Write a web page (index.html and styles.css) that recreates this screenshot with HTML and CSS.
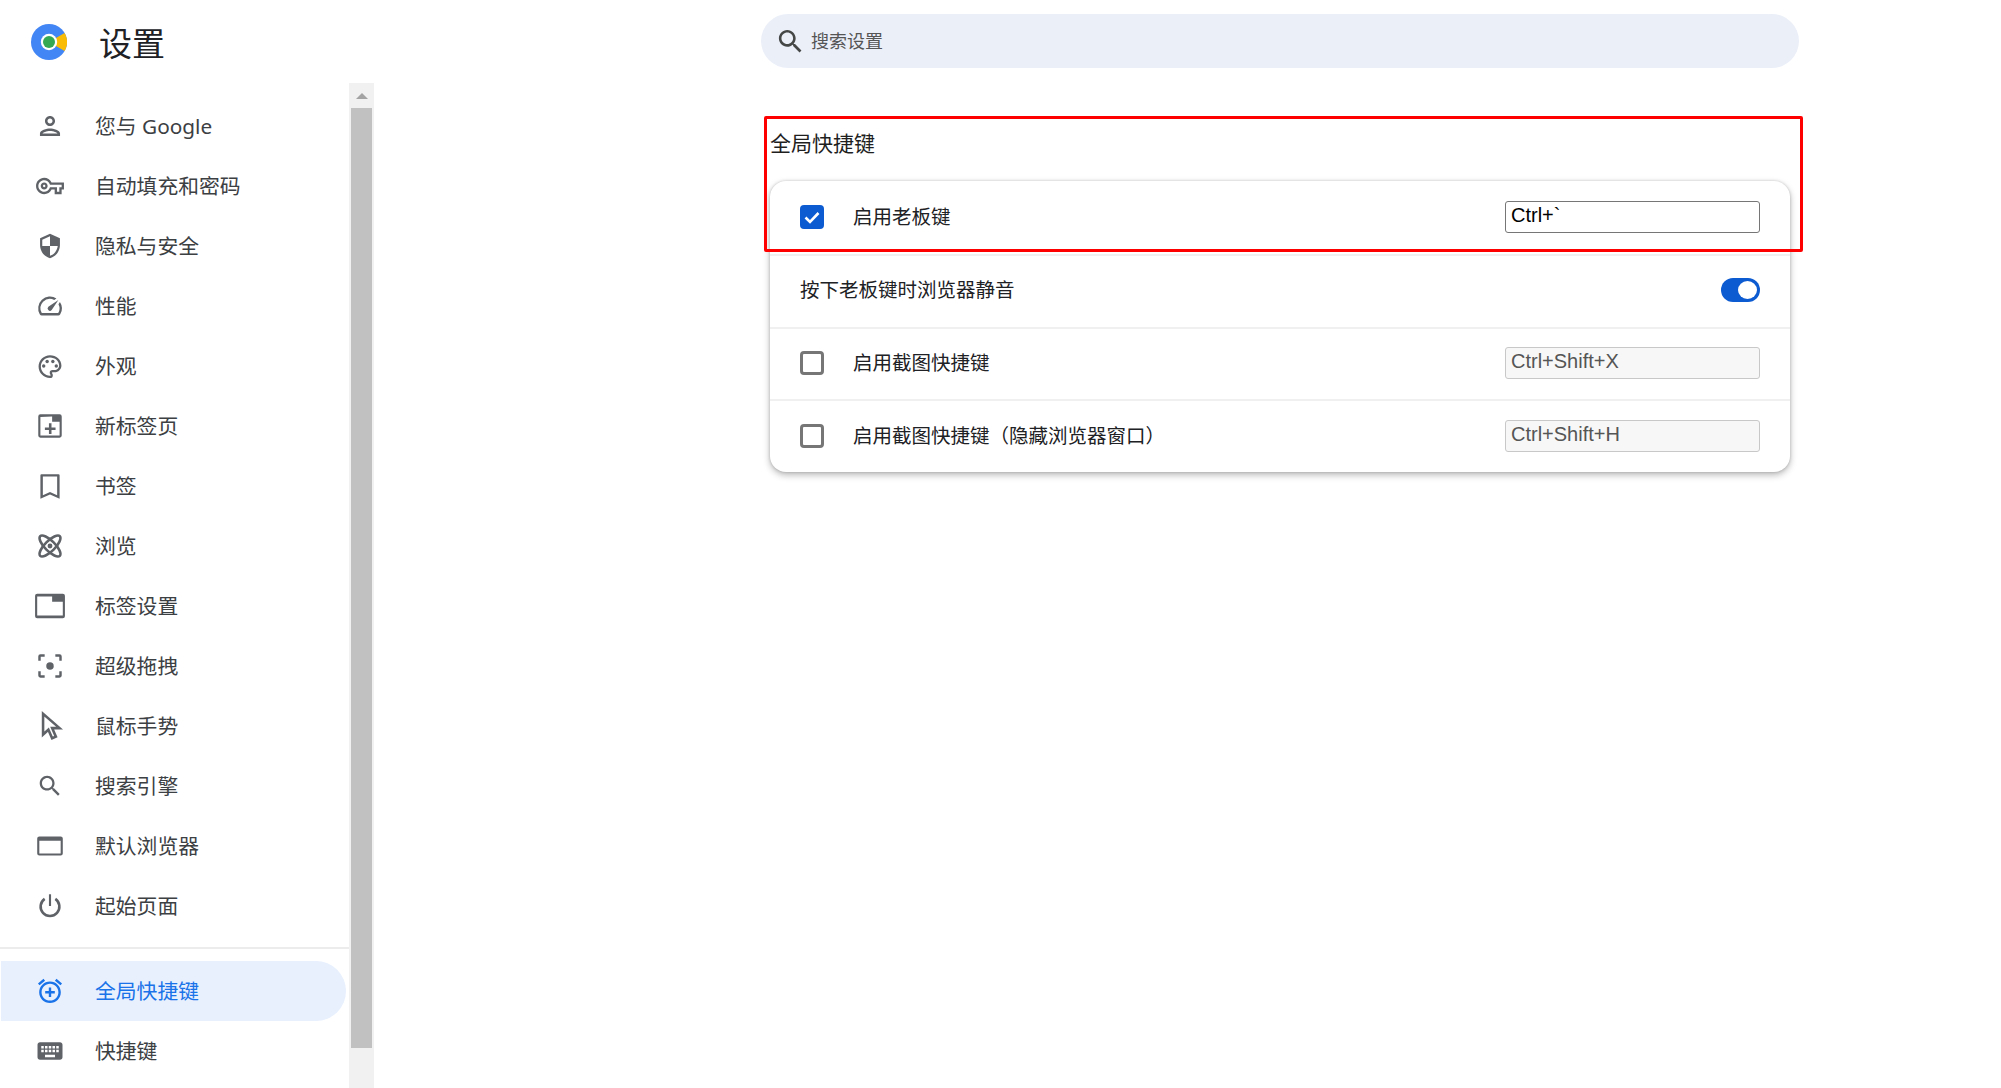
FILE: index.html
```html
<!DOCTYPE html>
<html lang="zh-CN">
<head>
<meta charset="utf-8">
<title>设置</title>
<link rel="stylesheet" href="styles.css">
</head>
<body>
<aside class="sidebar">
  <header class="brand">
    <svg class="logo" viewBox="0 0 36 36"><circle cx="18" cy="18" r="18" fill="#4285f4"/><path d="M18 18L33.6 9A18 18 0 0 1 33.6 27Z" fill="#fbbc05"/><circle cx="18" cy="18" r="8.2" fill="#fff"/><circle cx="18" cy="18" r="6" fill="#34a853"/></svg>
    <h1 class="brand-title">设置</h1>
  </header>
  <div class="side-body">
    <nav class="nav">
      <a class="nav-item"><svg class="ico" viewBox="-.75 -.75 25.500 25.500"><path d="M12 6c1.100 0 2 .9 2 2s-.9 2-2 2-2-.9-2-2 .9-2 2-2m0 10c2.700 0 5.800 1.290 6 2H6c.23-.72 3.310-2 6-2m0-12C9.790 4 8 5.790 8 8s1.790 4 4 4 4-1.790 4-4-1.790-4-4-4zm0 10c-2.670 0-8 1.340-8 4v2h16v-2c0-2.660-5.330-4-8-4z"/></svg><span>您与 Google</span></a>
      <a class="nav-item"><svg class="ico" viewBox="-1.750 -1.750 27.500 27.500"><path d="M22 19h-6v-4h-2.680c-1.140 2.420-3.600 4-6.320 4-3.860 0-7-3.140-7-7s3.140-7 7-7c2.720 0 5.170 1.580 6.320 4H24v6h-2v4zm-4-2h2v-4h2v-2H11.940l-.23-.67C11.010 8.340 9.110 7 7 7c-2.760 0-5 2.240-5 5s2.240 5 5 5c2.110 0 4.010-1.340 4.710-3.330l.23-.67H18v4zM7 15c-1.650 0-3-1.350-3-3s1.350-3 3-3 3 1.350 3 3-1.350 3-3 3zm0-4c-.55 0-1 .45-1 1s.45 1 1 1 1-.45 1-1-.45-1-1-1z"/></svg><span>自动填充和密码</span></a>
      <a class="nav-item"><svg class="ico" viewBox="-2.500 -2.500 29 29"><path d="M12 1L3 5v6c0 5.550 3.840 10.740 9 12 5.160-1.260 9-6.450 9-12V5l-9-4zm0 10.990h7c-.53 4.120-3.280 7.790-7 8.940V12H5V6.300l7-3.110v8.800z"/></svg><span>隐私与安全</span></a>
      <a class="nav-item"><svg class="ico" viewBox="-1.500 -1.500 27 27"><path d="M20.380 8.570l-1.230 1.850a8 8 0 0 1-.22 7.580H5.070A8 8 0 0 1 15.580 6.850l1.850-1.230A10 10 0 0 0 3.350 19a2 2 0 0 0 1.720 1h13.850a2 2 0 0 0 1.740-1 10 10 0 0 0-.27-10.440zm-9.790 6.840a2 2 0 0 0 2.830 0l5.660-8.490-8.490 5.660a2 2 0 0 0 0 2.830z"/></svg><span>性能</span></a>
      <a class="nav-item"><svg class="ico" viewBox="-2 -2.500 28 28"><path d="M12 22C6.490 22 2 17.510 2 12S6.490 2 12 2s10 4.040 10 9c0 3.310-2.690 6-6 6h-1.770c-.28 0-.5.22-.5.5 0 .12.05.23.13.33.41.47.64 1.060.64 1.670A2.500 2.500 0 0 1 12 22zm0-18c-4.410 0-8 3.590-8 8s3.590 8 8 8c.28 0 .5-.22.5-.5a.54.54 0 0 0-.14-.35c-.41-.46-.63-1.050-.63-1.650a2.500 2.500 0 0 1 2.500-2.500H16c2.210 0 4-1.790 4-4 0-3.860-3.590-7-8-7z"/><circle cx="6.500" cy="11.500" r="1.500"/><circle cx="9.500" cy="7.500" r="1.500"/><circle cx="14.500" cy="7.500" r="1.500"/><circle cx="17.500" cy="11.500" r="1.500"/></svg><span>外观</span></a>
      <a class="nav-item"><svg class="ico" viewBox="0 0 30 30"><path d="M6 4h18a2 2 0 0 1 2 2v18a2 2 0 0 1-2 2H6a2 2 0 0 1-2-2V6a2 2 0 0 1 2-2zm0 2.500v17.500h18V11h-7V6z" fill-rule="evenodd"/><path d="M14 12.500h2.400v3.800h3.800v2.400h-3.800v3.800H14v-3.800h-3.800v-2.400H14z"/></svg><span>新标签页</span></a>
      <a class="nav-item"><svg class="ico" viewBox="0 0 30 30"><path d="M7 4h16a1 1 0 0 1 1 1v22l-9-4-9 4V5a1 1 0 0 1 1-1zm1.300 2.200v17.400l6.700-3 6.700 3V6.200z" fill-rule="evenodd"/></svg><span>书签</span></a>
      <a class="nav-item"><svg class="ico" viewBox="0 0 30 30"><g class="ico-line"><ellipse cx="15" cy="15" rx="13" ry="4.800" transform="rotate(45 15 15)"/><ellipse cx="15" cy="15" rx="13" ry="4.800" transform="rotate(-45 15 15)"/></g><circle cx="15" cy="15" r="2.300"/></svg><span>浏览</span></a>
      <a class="nav-item"><svg class="ico" viewBox="0 0 30 30"><path d="M3 3.500h24a2 2 0 0 1 2 2v19a2 2 0 0 1-2 2H3a2 2 0 0 1-2-2v-19a2 2 0 0 1 2-2zm0 2.500v18h24V11H17V6z" fill-rule="evenodd"/></svg><span>标签设置</span></a>
      <a class="nav-item"><svg class="ico" viewBox="0 0 30 30"><path d="M4 10V6a2 2 0 0 1 2-2h4v2.300H6.300V10zM20 4h4a2 2 0 0 1 2 2v4h-2.300V6.300H20zM4 20h2.300v3.700H10V26H6a2 2 0 0 1-2-2zM23.700 20H26v4a2 2 0 0 1-2 2h-4v-2.300h3.700z"/><circle cx="15" cy="15" r="3.500"/></svg><span>超级拖拽</span></a>
      <a class="nav-item"><svg class="ico" viewBox="0 0 30 30"><path class="ico-line" d="M8.500 3.500v19.500l5-4.500 3.500 8 3.500-1.500-3.500-8h7z"/></svg><span>鼠标手势</span></a>
      <a class="nav-item"><svg class="ico" viewBox="-2 -2 28 28"><path d="M15.500 14h-.79l-.28-.27C15.410 12.590 16 11.110 16 9.500 16 5.910 13.090 3 9.500 3S3 5.910 3 9.500 5.910 16 9.500 16c1.610 0 3.090-.59 4.230-1.570l.27.28v.79l5 4.990L20.490 19l-4.990-5zm-6 0C7.010 14 5 11.990 5 9.500S7.010 5 9.500 5 14 7.010 14 9.500 11.990 14 9.500 14z"/></svg><span>搜索引擎</span></a>
      <a class="nav-item"><svg class="ico" viewBox="0 0 30 30"><path d="M5 6h20a2 2 0 0 1 2 2v14a2 2 0 0 1-2 2H5a2 2 0 0 1-2-2V8a2 2 0 0 1 2-2zm0 4v12h20V10z" fill-rule="evenodd"/></svg><span>默认浏览器</span></a>
      <a class="nav-item"><svg class="ico" viewBox="0 0 30 30"><path d="M14 4h2v11h-2z"/><path class="ico-line" d="M10 8.300a8.800 8.800 0 1 0 10 0"/></svg><span>起始页面</span></a>
      <hr class="nav-rule">
      <a class="nav-item is-active"><svg class="ico" viewBox="-1.300 -1.300 26.600 26.600"><path d="M7.880 3.390L6.600 1.860 2 5.710l1.290 1.530 4.590-3.850zM22 5.720l-4.600-3.860-1.290 1.530 4.600 3.860L22 5.720zM12 4c-4.970 0-9 4.030-9 9s4.030 9 9 9 9-4.030 9-9-4.030-9-9-9zm0 16c-3.860 0-7-3.140-7-7s3.140-7 7-7 7 3.140 7 7-3.140 7-7 7zm1-11h-2v3H8v2h3v3h2v-3h3v-2h-3V9z"/></svg><span>全局快捷键</span></a>
      <a class="nav-item"><svg class="ico" viewBox="-.8 -.8 25.600 25.600"><path d="M20 5H4c-1.100 0-1.990.9-1.990 2L2 17c0 1.100.9 2 2 2h16c1.100 0 2-.9 2-2V7c0-1.100-.9-2-2-2zm-9 3h2v2h-2V8zm0 3h2v2h-2v-2zM8 8h2v2H8V8zm0 3h2v2H8v-2zm-1 2H5v-2h2v2zm0-3H5V8h2v2zm9 7H8v-2h8v2zm0-4h-2v-2h2v2zm0-3h-2V8h2v2zm3 3h-2v-2h2v2zm0-3h-2V8h2v2z"/></svg><span>快捷键</span></a>
    </nav>
    <div class="scrollbar">
      <div class="scroll-btn"><span class="scroll-arrow"></span></div>
      <div class="scroll-thumb"></div>
    </div>
  </div>
</aside>
<main class="main">
  <div class="search">
    <svg class="search-ico" viewBox="0 0 24 24"><path d="M15.500 14h-.79l-.28-.27C15.410 12.590 16 11.110 16 9.500 16 5.910 13.090 3 9.500 3S3 5.910 3 9.500 5.910 16 9.500 16c1.610 0 3.090-.59 4.230-1.570l.27.28v.79l5 4.990L20.490 19l-4.990-5zm-6 0C7.010 14 5 11.990 5 9.500S7.010 5 9.500 5 14 7.010 14 9.500 11.990 14 9.500 14z"/></svg>
    <span class="search-text">搜索设置</span>
  </div>
  <section class="section">
    <h2 class="section-title">全局快捷键</h2>
    <div class="card">
      <div class="row">
        <span class="check is-on"><svg viewBox="0 0 24 24"><path d="M5.500 12.500l4.500 4.500 8.500-9" /></svg></span>
        <span class="label">启用老板键</span>
        <input class="key" type="text" value="Ctrl+`">
      </div>
      <div class="row">
        <span class="label label-plain">按下老板键时浏览器静音</span>
        <span class="toggle"><span class="toggle-knob"></span></span>
      </div>
      <div class="row">
        <span class="check"></span>
        <span class="label">启用截图快捷键</span>
        <input class="key" type="text" value="Ctrl+Shift+X" disabled>
      </div>
      <div class="row">
        <span class="check"></span>
        <span class="label">启用截图快捷键（隐藏浏览器窗口）</span>
        <input class="key" type="text" value="Ctrl+Shift+H" disabled>
      </div>
    </div>
    <div class="callout"></div>
  </section>
</main>
</body>
</html>
```

FILE: styles.css
```css
* { box-sizing: border-box; }
html, body { height: 100%; }
body {
  margin: 0;
  display: flex;
  height: 1088px;
  overflow: hidden;
  background: #fff;
  font-family: "Noto Sans", "Noto Sans CJK SC", sans-serif;
  color: #202124;
}

/* sidebar */
.sidebar { width: 374px; flex: none; display: flex; flex-direction: column; }
.brand { height: 83px; flex: none; display: flex; align-items: center; padding-left: 31px; gap: 32px; }
.logo { width: 36px; height: 36px; flex: none; }
.brand-title { margin: 0; padding-top: 5px; font-size: 33px; font-weight: 400; line-height: 44px; color: #202124; }
.side-body { flex: 1; min-height: 0; display: flex; }
.nav { width: 349px; flex: none; padding-top: 13px; display: flex; flex-direction: column; }
.nav-item {
  height: 60px; flex: none;
  display: flex; align-items: center;
  padding-left: 34px; gap: 29px;
  font-size: 20.8px; line-height: 28px;
  color: #3c4043;
}
.nav-item span { white-space: nowrap; }
.ico { width: 32px; height: 32px; flex: none; fill: #5f6368; }
.ico-line { fill: none; stroke: #5f6368; stroke-width: 2.4px; }
.nav-rule { margin: 11px 0 12px; border: 0; border-top: 2px solid #ececec; height: 0; flex: none; width: 349px; }
.is-active {
  margin-left: 1px; margin-right: 3px;
  padding-left: 33px;
  background: #e8f0fe;
  border-radius: 0 30px 30px 0;
  color: #1a73e8;
}
.is-active .ico { fill: #1a73e8; }
.scrollbar { width: 25px; flex: none; background: #f1f1f1; display: flex; flex-direction: column; align-items: center; }
.scroll-btn { height: 25px; flex: none; width: 100%; display: flex; align-items: center; justify-content: center; }
.scroll-arrow { width: 0; height: 0; border-left: 6px solid transparent; border-right: 6px solid transparent; border-bottom: 6px solid #a3a3a3; }
.scroll-thumb { width: 21px; height: 940px; flex: none; background: #c1c1c1; }

/* main */
.main { flex: 1; min-width: 0; padding: 14px 0 0 387px; }
.search {
  width: 1038px; height: 54px;
  display: flex; align-items: center;
  padding-left: 14px; gap: 5px;
  background: #ebeff8;
  border-radius: 27px;
}
.search-ico { width: 31px; height: 31px; flex: none; fill: #444746; }
.search-text { font-size: 18px; line-height: 24px; color: #555; }
.section { position: relative; width: 1020px; margin: 48px 0 0 9px; }
.section-title { margin: 0; height: 65px; font-size: 21px; line-height: 54px; font-weight: 400; color: #1f1f1f; }
.card {
  background: #fff;
  border-radius: 16px;
  box-shadow: 0 3px 7px rgba(0, 0, 0, .28), 0 0 3px rgba(0, 0, 0, .18);
}
.row {
  height: 72.75px;
  display: flex; align-items: center;
  padding: 0 30px;
}
.row + .row { box-shadow: inset 0 2px 0 #f0f0f0; }
.check { width: 24px; height: 24px; flex: none; margin-right: 29px; border: 3px solid #767676; border-radius: 4px; }
.check.is-on { background: #0d5bd1; border: 0; }
.check svg { display: block; width: 24px; height: 24px; fill: none; stroke: #fff; stroke-width: 2.6px; }
.label { flex: 1; font-size: 19.5px; line-height: 26px; color: #202124; white-space: nowrap; }
.key {
  width: 255px; height: 32px; flex: none;
  margin: 0; padding: 0 5px 3px;
  font: 20px "Liberation Sans", Arial, sans-serif;
  color: #000;
  background: #fff;
  border: 1px solid #767676;
  border-radius: 3px;
  outline: 0;
}
.key:disabled { color: #555; background: #f7f7f7; border-color: #c8c8c8; }
.toggle { width: 39px; height: 24px; flex: none; padding: 3px 3px 3px 17px; background: #0d5bd1; border-radius: 12px; }
.toggle-knob { display: block; width: 19px; height: 18px; border-radius: 50%; background: #fff; }
.callout {
  position: absolute;
  left: -6px; top: 0;
  width: 1039px; height: 136px;
  border: 3px solid #f00;
  border-radius: 2px;
  pointer-events: none;
}
```
